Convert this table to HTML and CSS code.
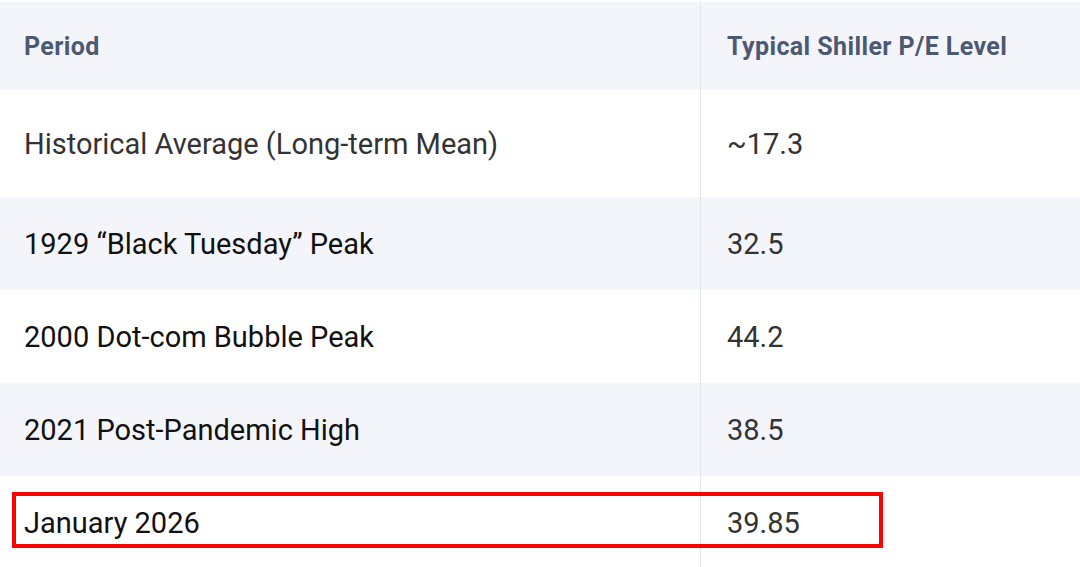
FILE: index.html
```html
<!DOCTYPE html>
<html lang="en">
<head>
    <meta charset="UTF-8">
    <meta name="viewport" content="width=device-width, initial-scale=1.0">
    <title>Shiller P/E by Period</title>
    <link rel="stylesheet" href="styles.css">
</head>
<body>
    <div class="container">
        <table class="pe-table">
            <thead>
                <tr>
                    <th class="col-period">Period</th>
                    <th>Typical Shiller P/E Level</th>
                </tr>
            </thead>
            <tbody>
                <tr class="first">
                    <td class="col-period muted">Historical Average (Long-term Mean)</td>
                    <td>~17.3</td>
                </tr>
                <tr class="alt">
                    <td class="col-period">1929 “Black Tuesday” Peak</td>
                    <td>32.5</td>
                </tr>
                <tr>
                    <td class="col-period">2000 Dot-com Bubble Peak</td>
                    <td>44.2</td>
                </tr>
                <tr class="alt">
                    <td class="col-period">2021 Post-Pandemic High</td>
                    <td>38.5</td>
                </tr>
                <tr>
                    <td class="col-period highlight-cell">
                        January 2026
                        <div class="highlight"></div>
                    </td>
                    <td>39.85</td>
                </tr>
            </tbody>
        </table>
    </div>
</body>
</html>
```

FILE: styles.css
```css
body {
    margin: 0;
    background-color: white;
    font-family: Roboto, "Liberation Sans", sans-serif;
}
.container {
    padding-top: 2px;
}
.pe-table {
    width: 100%;
    border-collapse: collapse;
}
.pe-table th,
.pe-table td {
    text-align: left;
    padding: 0 24px;
    vertical-align: middle;
}
.pe-table th {
    height: 88px;
    background-color: #f4f5fa;
    color: #4b5a72;
    font-size: 25px;
    font-weight: bold;
    letter-spacing: 0.4px;
}
.pe-table td {
    height: 93px;
    font-size: 29px;
    color: #111;
}
.pe-table td + td {
    color: #333;
    padding-left: 26px;
}
.pe-table th + th {
    padding-left: 26px;
}
.col-period {
    width: 652px;
    border-right: 1px solid #e4e7ee;
}
.pe-table tr.first td {
    height: 107px;
}
.pe-table td.muted {
    color: #333;
}
.pe-table tr.alt td {
    background-color: #f4f5fa;
}
.highlight-cell {
    position: relative;
}
.highlight {
    position: absolute;
    left: 12px;
    top: 16px;
    width: 863px;
    height: 48px;
    border: 4px solid #ff0000;
    pointer-events: none;
}
```
